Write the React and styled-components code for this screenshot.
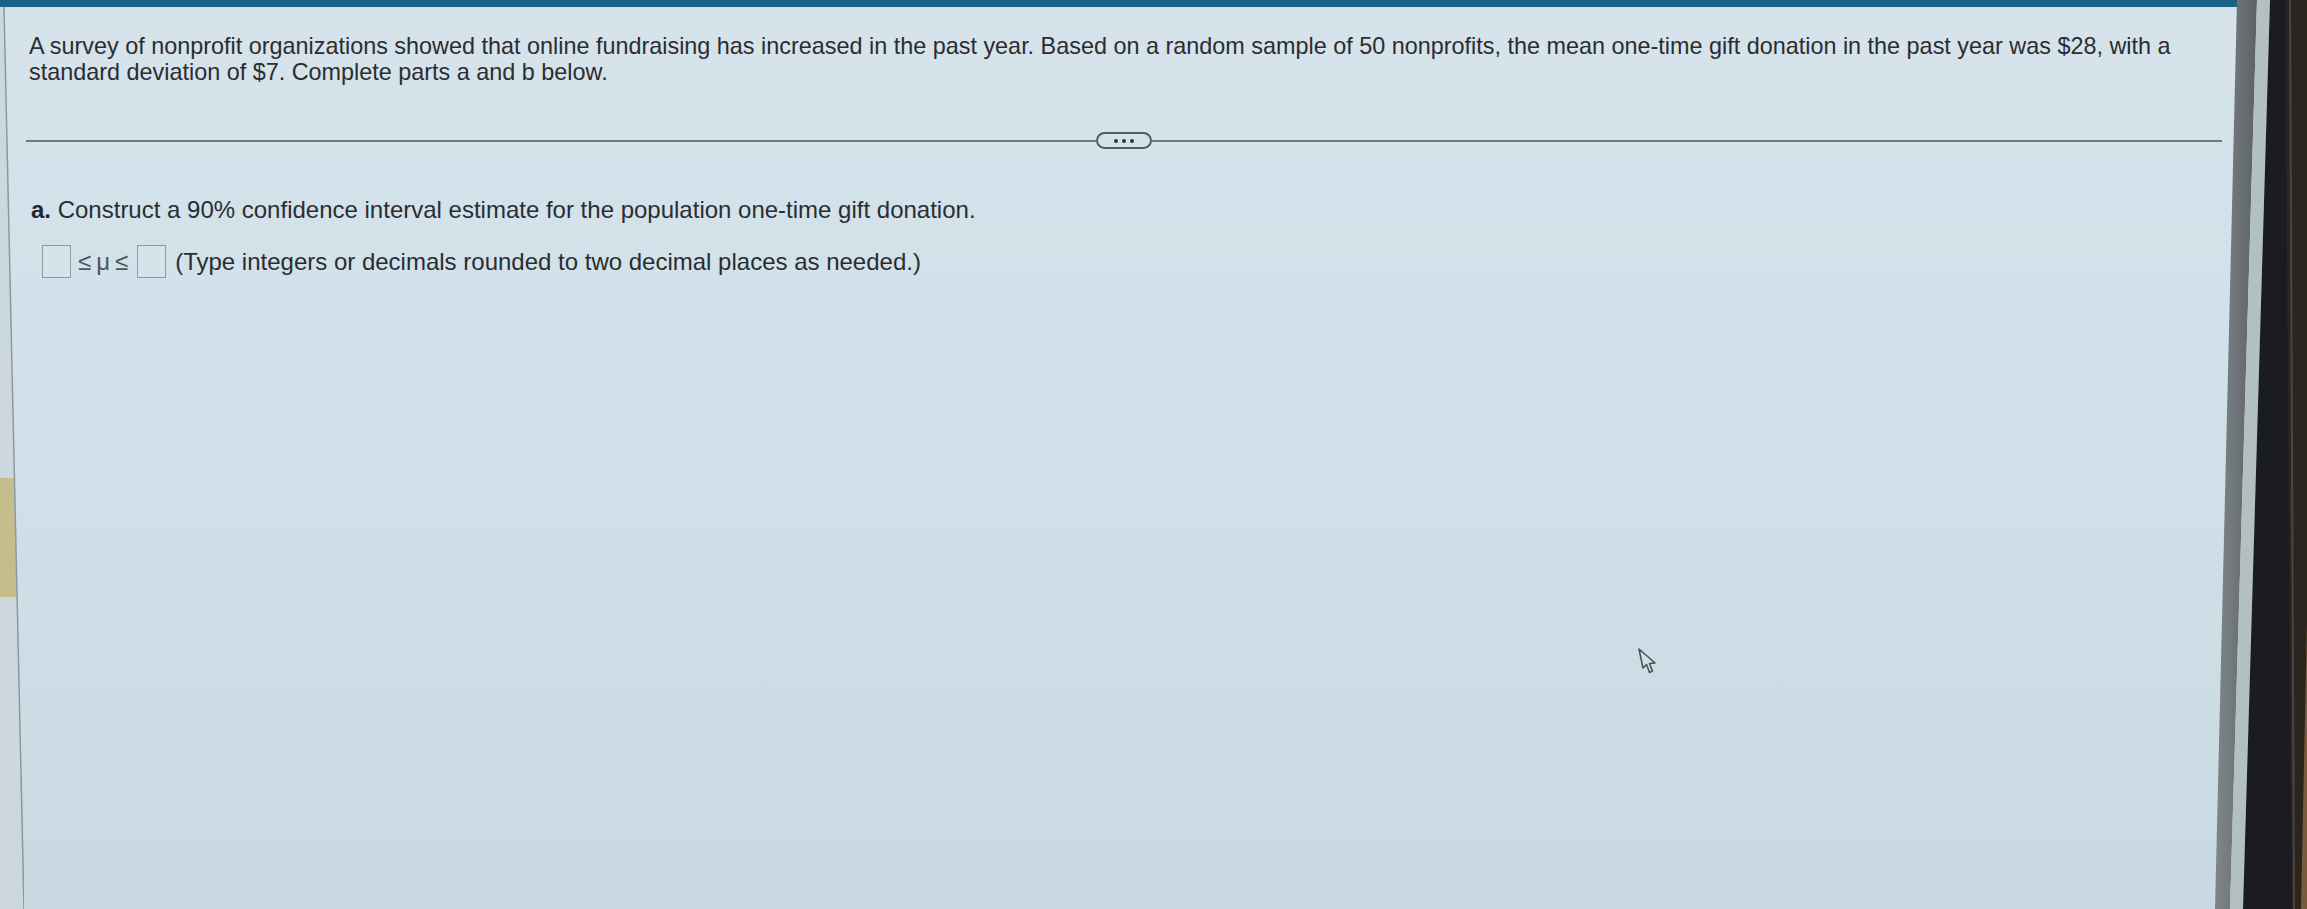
import styled, { createGlobalStyle } from 'styled-components';

const GlobalStyle = createGlobalStyle`
html, body {
  margin: 0;
  padding: 0;
  overflow: hidden;
}
body {
  font-family: "Liberation Sans", Arial, sans-serif;
}
`;

const Frame = styled.div`
position: relative;
display: flex;
width: 2307px;
height: 909px;
overflow: hidden;
background: linear-gradient(180deg, #d6e3eb 0%, #d1e0e9 45%, #ccdce5 80%, #c9d9e1 100%);
`;

const Screen = styled.div`
flex: 1;
min-width: 0;
display: flex;
flex-direction: column;
`;

const TopBar = styled.div`
height: 7px;
background: #1c6286;
`;

const Question = styled.p`
margin: 26px 30px 0 5px;
font-size: 23.4px;
line-height: 26px;
color: #2a2d31;
`;

const Divider = styled.div`
display: flex;
align-items: center;
margin: 47px -12px 0 2px;
&::before, &::after {
  content: '';
  flex: 1;
  height: 2px;
  background: #6d7a82;
}
`;

const MoreButton = styled.div`
width: 52px;
height: 13px;
border: 2px solid #525c63;
border-radius: 9px;
display: flex;
align-items: center;
justify-content: center;
gap: 4px;
`;

const Dot = styled.span`
width: 4px;
height: 4px;
border-radius: 50%;
background: #2c3338;
`;

const Part = styled.p`
margin: 46px 0 0 7px;
font-size: 24px;
line-height: 29px;
color: #2a2d31;
`;

const Label = styled.b`
color: #1f2833;
`;

const AnswerRow = styled.div`
display: flex;
align-items: center;
margin: 21px 0 0 18px;
font-size: 24px;
color: #2a2d31;
`;

const Box = styled.span`
width: 29px;
height: 33px;
box-sizing: border-box;
border: 1.5px solid #8e999f;
background: #d6e3ea;
`;

const Relation = styled.span`
margin: 0 4px 0 7px;
font-size: 24px;
letter-spacing: 5px;
color: #4a5661;
`;

const Hint = styled.span`
margin-left: 9px;
`;

const Edge = styled.svg`
flex: none;
display: block;
position: relative;
`;

const Cursor = styled.svg`
position: absolute;
left: 1638px;
top: 648px;
`;

function LeftEdge() {
  return (
    <Edge width="24" height="909" viewBox="0 0 24 909">
      <polygon points="0,7 4,7 24,909 0,909" fill="#ccd8de" />
      <polygon points="0,478 14,478 17,597 0,597" fill="#c6bd8d" />
      <line x1="4" y1="7" x2="24" y2="909" stroke="#8b99a1" strokeWidth="1.5" />
      <rect x="0" y="0" width="24" height="7" fill="#1c6286" />
    </Edge>
  );
}

function Bezel() {
  return (
    <Edge width="97" height="909" viewBox="0 0 97 909">
      <defs>
        <linearGradient id="grey" x1="0" y1="0" x2="1" y2="0">
          <stop offset="0" stopColor="#80878a" />
          <stop offset="1" stopColor="#5c6266" />
        </linearGradient>
      </defs>
      <polygon points="0,0 27,0 5,909 0,909" fill="#d2e0e8" fillOpacity="0" />
      <polygon points="0,0 27,0 27,7 0,7" fill="#1c6286" />
      <polygon points="27,0 47,0 20,909 5,909" fill="url(#grey)" />
      <polygon points="47,0 60,0 33,909 20,909" fill="#b3c0c0" />
      <polygon points="60,0 97,0 97,909 33,909" fill="#1b1c22" />
      <polygon points="75,0 97,0 97,909 82,909" fill="#2b2520" />
      <polygon points="79,0 81,0 85,909 83,909" fill="#4a4540" />
      <polygon points="91,909 97,909 97,620" fill="#7a5a3a" />
    </Edge>
  );
}

export default function App() {
  return (
    <>
      <GlobalStyle />
      <Frame>
        <LeftEdge />
        <Screen>
          <TopBar />
          <Question>
            A survey of nonprofit organizations showed that online fundraising has increased in the past year. Based on a random sample of 50 nonprofits, the mean one-time gift donation in the past year was $28, with a
            <br />
            standard deviation of $7. Complete parts a and b below.
          </Question>
          <Divider>
            <MoreButton>
              <Dot />
              <Dot />
              <Dot />
            </MoreButton>
          </Divider>
          <Part>
            <Label>a.</Label> Construct a 90% confidence interval estimate for the population one-time gift donation.
          </Part>
          <AnswerRow>
            <Box />
            <Relation>≤μ≤</Relation>
            <Box />
            <Hint>(Type integers or decimals rounded to two decimal places as needed.)</Hint>
          </AnswerRow>
        </Screen>
        <Bezel />
        <Cursor width="20" height="28" viewBox="0 0 20 28">
          <polygon
            points="1,1 5,20 8.5,16.5 11.5,24.5 14.5,23 11.5,15.5 17,15"
            fill="#d3dfe5"
            stroke="#4b5358"
            strokeWidth="1.6"
            strokeLinejoin="round"
          />
        </Cursor>
      </Frame>
    </>
  );
}
